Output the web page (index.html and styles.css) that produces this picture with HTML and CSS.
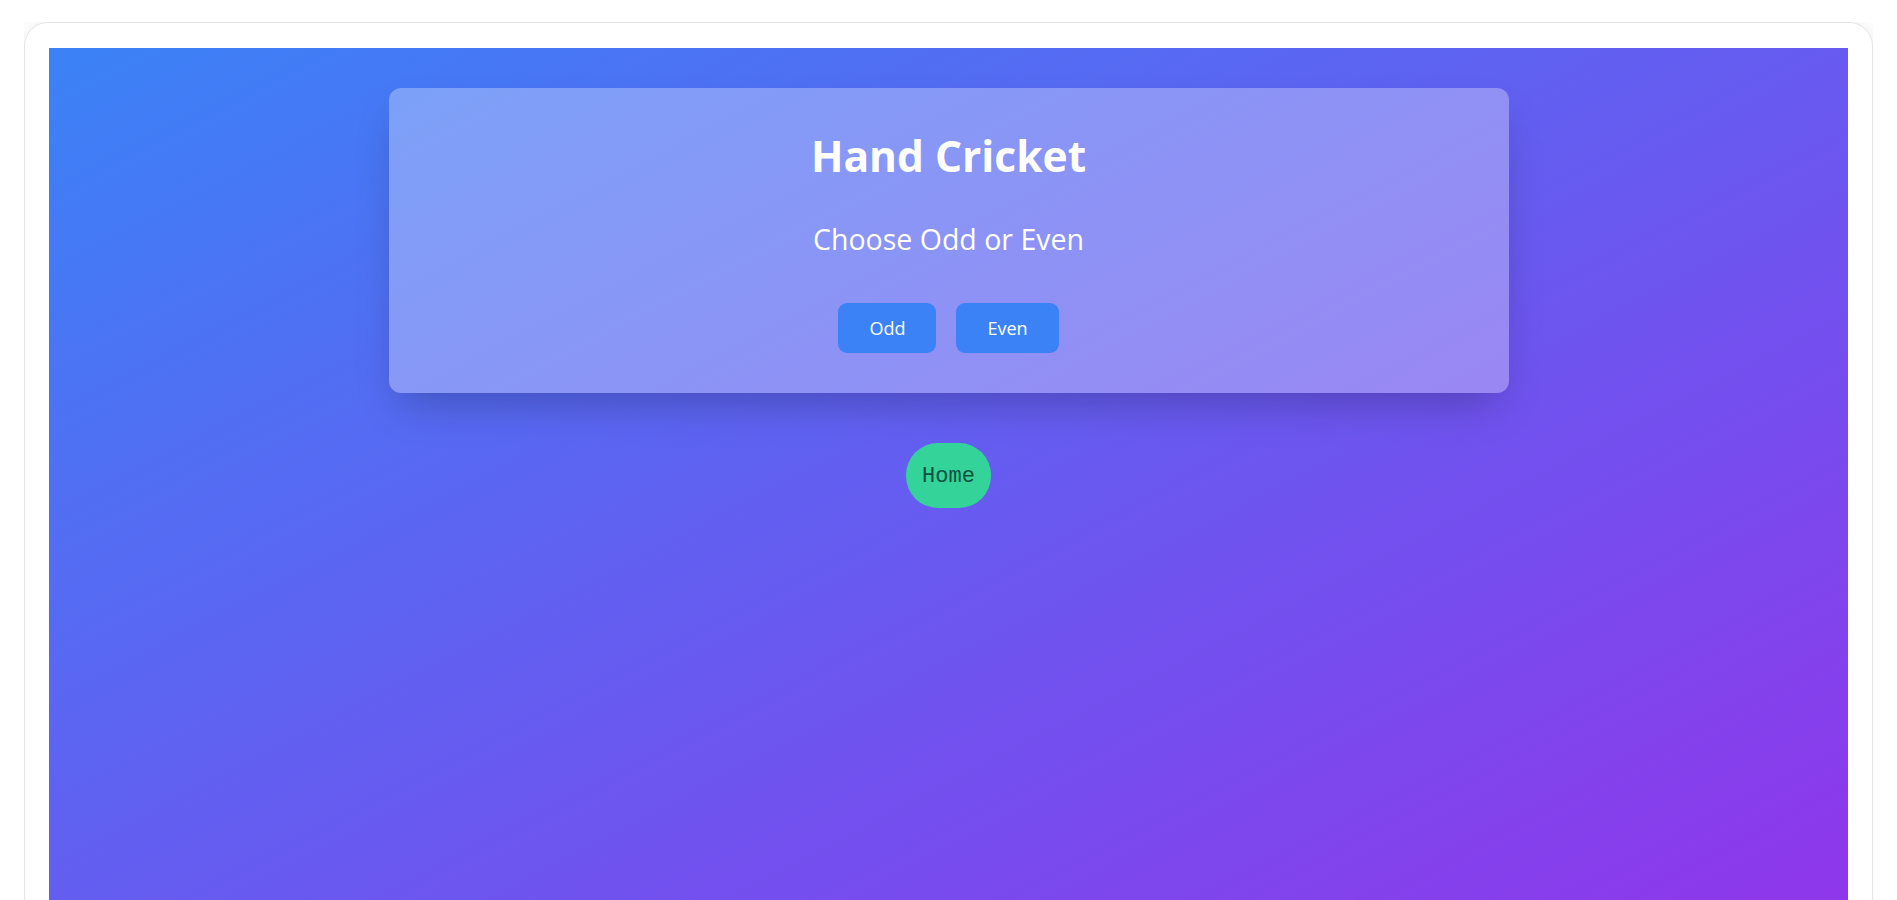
FILE: index.html
```html
<!DOCTYPE html>
<html lang="en">
<head>
  <meta charset="UTF-8" />
  <meta name="viewport" content="width=device-width, initial-scale=1.0"/>
  <title>Hand Cricket</title>
  <link rel="stylesheet" href="styles.css">
</head>
<body>
  <div class="frame">
    <main class="stage">
      <section class="card">
        <h1>Hand Cricket</h1>
        <p class="prompt">Choose Odd or Even</p>
        <div class="choices">
          <button class="choice">Odd</button>
          <button class="choice">Even</button>
        </div>
      </section>

      <button class="home">Home</button>
    </main>
  </div>
</body>
</html>
```

FILE: styles.css
```css
html, body {
  overflow: hidden;
}

body {
  margin: 22px 24px;
  background: #fff;
  font-family: 'Open Sans', 'Noto Sans', sans-serif;
}

.frame {
  background: #fff;
  border: 1px solid #e9e4e4;
  border-radius: 24px;
  padding: 25px 24px;
  box-shadow: 0 4px 20px rgba(0, 0, 0, 0.1);
}

.stage {
  min-height: 900px;
  background: linear-gradient(to bottom right, #3b82f6, #9333ea);
  padding-top: 40px;
  display: flex;
  flex-direction: column;
  align-items: center;
}

.card {
  width: 1120px;
  box-sizing: border-box;
  padding: 44px 40px 40px;
  background: rgba(255, 255, 255, 0.3);
  border-radius: 12px;
  box-shadow: 0 20px 40px -12px rgba(0, 0, 0, 0.25);
  text-align: center;
  color: #fff;
}

.card h1 {
  margin: 0;
  font-size: 42.5px;
  line-height: 48px;
  font-weight: 700;
}

.prompt {
  margin: 41px 0 0;
  font-size: 28.5px;
  line-height: 36px;
}

.choices {
  margin-top: 46px;
  display: flex;
  justify-content: center;
  gap: 20px;
}

.choice {
  font-family: inherit;
  font-size: 18px;
  line-height: 28px;
  padding: 11px 31px;
  color: #fff;
  background: #3b82f6;
  border: none;
  border-radius: 9px;
  cursor: pointer;
}

.home {
  margin-top: 50px;
  font-family: 'Liberation Mono', monospace;
  font-size: 22px;
  line-height: 32px;
  padding: 18px 16px 15px;
  color: #0b513f;
  background: #34d399;
  border: none;
  border-radius: 32px;
  cursor: pointer;
}
```
